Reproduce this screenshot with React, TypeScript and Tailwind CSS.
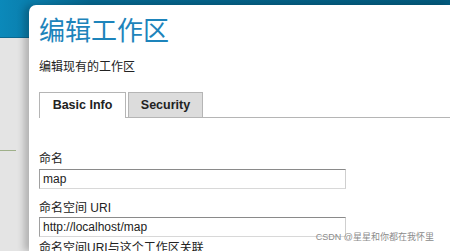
import React from "react";

const cjk = { fontFamily: '"Liberation Sans", "Noto Sans CJK SC", sans-serif' };

export default function App() {
  return (
    <div className="relative w-[450px] h-[251px] overflow-hidden bg-[#e4e4e4]" style={cjk}>
      {/* header band */}
      <div className="h-[38px] bg-[linear-gradient(90deg,#0b89ba_0%,#0a7fae_6%,#06678f_20%,#035a7d_100%)] border-b border-[#0a6890]" />
      <div className="flex -mt-[33px]">
        {/* left strip */}
        <div className="w-[29px] shrink-0 flex flex-col">
          <div className="h-[33px]" />
          <div className="h-[112px]" />
          <div className="w-[16px] h-px bg-[#9fb08a]" />
        </div>
        {/* panel */}
        <div className="flex-1 h-[246px] bg-white rounded-tl-[7px] shadow-[-5px_0_7px_rgba(0,0,0,0.22)] pl-[10px] pt-[8px]">
          <div className="text-[26px] leading-[32px] text-[#1d84bb]" style={{ fontFamily: '"Noto Sans CJK SC", sans-serif' }}>
            编辑工作区
          </div>
          <div className="mt-[14px] text-[12px] leading-[16px] text-[#222]">编辑现有的工作区</div>
          <div className="mt-[17px] flex items-end border-b border-[#b5b5b5] h-[26px]">
            <div className="w-[87px] h-[26px] -mb-px flex items-center justify-center bg-white border border-b-0 border-[#b5b5b5] text-[12.5px] font-bold text-[#222]">
              Basic Info
            </div>
            <div className="ml-[2px] w-[75px] h-[25px] flex items-center justify-center bg-[#dcdcdc] border border-b-0 border-[#b5b5b5] text-[12.5px] font-bold text-[#222]">
              Security
            </div>
          </div>
          <div className="mt-[33px] text-[12px] leading-[16px] text-[#222]">命名</div>
          <div className="mt-[2px] w-[307px] h-[20px] border border-t-[#8a8a8a] border-l-[#a0a0a0] border-r-[#cfcfcf] border-b-[#d8d8d8] px-[3px] flex items-center text-[12px] text-[#222]">
            map
          </div>
          <div className="mt-[11px] text-[12px] leading-[16px] text-[#222]">命名空间 URI</div>
          <div className="mt-[1px] w-[307px] h-[20px] border border-t-[#8a8a8a] border-l-[#a0a0a0] border-r-[#cfcfcf] border-b-[#d8d8d8] px-[3px] flex items-center text-[12px] text-[#222]">
            http://localhost/map
          </div>
          <div className="mt-[3px] text-[12px] leading-[16px] text-[#222]">命名空间URI与这个工作区关联</div>
        </div>
      </div>
      <div className="absolute right-[16px] bottom-[8px] text-[9px] leading-[11px] text-[#8c8c8c]">
        CSDN @星星和你都在我怀里
      </div>
    </div>
  );
}
